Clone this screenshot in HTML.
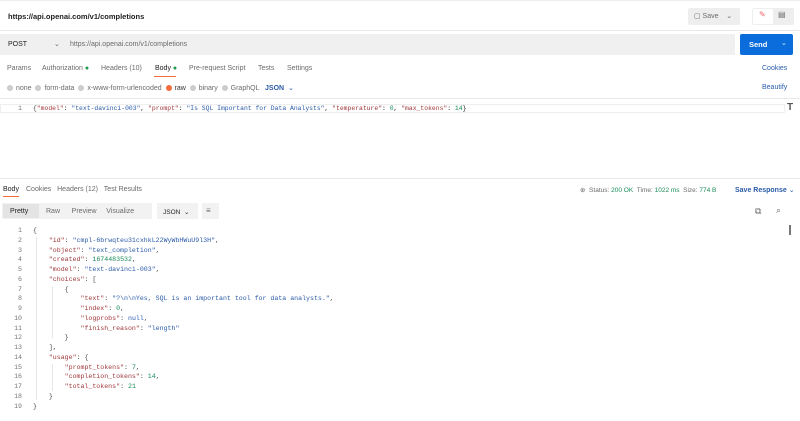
<!DOCTYPE html>
<html><head><style>
*{margin:0;padding:0;box-sizing:border-box}
body{width:800px;height:421px;background:#fff;font-family:"Liberation Sans",sans-serif;color:#212121;position:relative;overflow:hidden;font-size:7px}
.a{position:absolute;white-space:nowrap}
.g{color:#6b6b6b}
.mono{font-family:"Liberation Mono",monospace;font-size:6.6px}
.k{color:#a0383b}.s{color:#2a5ba8}.n{color:#1a8a5a}.p{color:#444}
.ln{color:#777;width:22px;text-align:right}
.dot{display:inline-block;width:6px;height:6px;border-radius:50%;background:#ccc;vertical-align:-1px;margin-right:3px}
</style></head><body>
<div class="a" style="left:0;top:0;width:800px;height:1px;background:#eee"></div>
<div class="a" style="left:8px;top:12px;font-size:7.5px;font-weight:bold">https://api.openai.com/v1/completions</div>
<div class="a" style="left:688px;top:8px;width:52px;height:17px;background:#eee;border-radius:2px"></div>
<div class="a g" style="left:694px;top:12px;font-size:7px">▢ Save &nbsp;&nbsp;&nbsp;⌄</div>
<div class="a" style="left:752px;top:8px;width:42px;height:17px;background:#eee;border-radius:2px"></div>
<div class="a" style="left:753px;top:9px;width:20px;height:15px;background:#fff"></div>
<div class="a" style="left:759px;top:10px;color:#e66;font-size:8px">✎</div>
<div class="a g" style="left:778px;top:10px;font-size:8px">▤</div>
<div class="a" style="left:0;top:30px;width:800px;height:1px;background:#e8e8e8"></div>
<div class="a" style="left:0;top:34px;width:735px;height:21px;background:#f0f0f0"></div>
<div class="a" style="left:8px;top:41px;font-size:7px">POST</div>
<div class="a g" style="left:54px;top:40px;font-size:7px">⌄</div>
<div class="a g" style="left:70px;top:41px;font-size:7px">https://api.openai.com/v1/completions</div>
<div class="a" style="left:740px;top:34px;width:53px;height:21px;background:#0a6ddb;border-radius:2px"></div>
<div class="a" style="left:749px;top:40px;font-size:7.5px;font-weight:bold;color:#fff">Send</div>
<div class="a" style="left:781px;top:39px;font-size:7px;color:#cfe">⌄</div>
<div class="a g" style="left:7px;top:65px;font-size:7px">Params</div>
<div class="a g" style="left:42px;top:65px;font-size:7px">Authorization <span style="color:#1a9a4a">●</span></div>
<div class="a g" style="left:101px;top:65px;font-size:7px">Headers (10)</div>
<div class="a" style="left:155px;top:65px;font-size:7px">Body <span style="color:#1a9a4a">●</span></div>
<div class="a" style="left:154px;top:76px;width:22px;height:1px;background:#f26b3a"></div>
<div class="a g" style="left:189px;top:65px;font-size:7px">Pre-request Script</div>
<div class="a g" style="left:258px;top:65px;font-size:7px">Tests</div>
<div class="a g" style="left:287px;top:65px;font-size:7px">Settings</div>
<div class="a" style="left:762px;top:65px;font-size:7px;color:#2a5ba8">Cookies</div>
<div class="a g" style="left:7px;top:84px;font-size:7px"><span class="dot"></span>none &nbsp;<span class="dot"></span>form-data &nbsp;<span class="dot"></span>x-www-form-urlencoded &nbsp;<span class="dot" style="background:#f26b3a"></span><span style="color:#333">raw</span> &nbsp;<span class="dot"></span>binary &nbsp;<span class="dot"></span>GraphQL &nbsp;&nbsp;<b style="color:#2a5ba8">JSON</b> &nbsp;<span style="color:#2a5ba8">⌄</span></div>
<div class="a" style="left:762px;top:84px;font-size:7px;color:#2a5ba8">Beautify</div>
<div class="a" style="left:0;top:98px;width:800px;height:1px;background:#e8e8e8"></div>
<div class="a" style="left:0;top:104px;width:785px;height:9px;border:1px solid #eee"></div>
<div class="a mono ln" style="left:0;top:105px">1</div>
<div class="a mono" style="left:33px;top:105px;font-size:6.4px"><span class="p">{</span><span class="k">"model"</span>: <span class="s">"text-davinci-003"</span>, <span class="k">"prompt"</span>: <span class="s">"Is SQL Important for Data Analysts"</span>, <span class="k">"temperature"</span>: <span class="n">0</span>, <span class="k">"max_tokens"</span>: <span class="n">14</span>}</div>
<div class="a" style="left:787px;top:102px;font-size:10px;font-weight:bold;color:#555">T</div>
<div class="a" style="left:0;top:178px;width:800px;height:1px;background:#e8e8e8"></div>
<div class="a" style="left:3px;top:186px;font-size:7px">Body</div>
<div class="a" style="left:3px;top:196px;width:16px;height:1px;background:#f26b3a"></div>
<div class="a g" style="left:26px;top:186px;font-size:7px">Cookies &nbsp;&nbsp;Headers (12) &nbsp;&nbsp;Test Results</div>
<div class="a g" style="left:580px;top:186px;font-size:6.5px">⊕ &nbsp;Status: <span style="color:#1a8a5a">200 OK</span> &nbsp;Time: <span style="color:#1a8a5a">1022 ms</span> &nbsp;Size: <span style="color:#1a8a5a">774 B</span></div>
<div class="a" style="left:735px;top:186px;font-size:7px;color:#2a5ba8;font-weight:bold">Save Response <span style="font-weight:normal">⌄</span></div>
<div class="a" style="left:2px;top:203px;width:150px;height:16px;background:#f2f2f2"></div>
<div class="a" style="left:3px;top:204px;width:36px;height:14px;background:#e4e4e4"></div>
<div class="a" style="left:10px;top:208px;font-size:7px">Pretty</div>
<div class="a g" style="left:46px;top:208px;font-size:7px">Raw &nbsp;&nbsp;&nbsp;&nbsp;&nbsp;Preview &nbsp;&nbsp;&nbsp;&nbsp;Visualize</div>
<div class="a" style="left:157px;top:203px;width:41px;height:16px;background:#f2f2f2"></div>
<div class="a" style="left:163px;top:208px;font-size:6.5px">JSON &nbsp;⌄</div>
<div class="a" style="left:202px;top:203px;width:17px;height:16px;background:#f2f2f2"></div>
<div class="a g" style="left:206px;top:206px;font-size:8px">≡</div>
<div class="a g" style="left:755px;top:206px;font-size:9px">⧉</div>
<div class="a g" style="left:776px;top:205px;font-size:9px">⌕</div>
<div class="a" style="left:789px;top:225px;width:2px;height:10px;background:#777"></div>
<div class="a" style="left:36px;top:237px;width:1px;height:163px;background:#e6e6e6"></div>
<div class="a" style="left:52px;top:286px;width:1px;height:52px;background:#e6e6e6"></div>
<div class="a" style="left:52px;top:364px;width:1px;height:27px;background:#e6e6e6"></div>
<div class="a mono" style="left:0;top:226px;line-height:9.75px">
<div style="display:flex"><div class="ln">1<br>2<br>3<br>4<br>5<br>6<br>7<br>8<br>9<br>10<br>11<br>12<br>13<br>14<br>15<br>16<br>17<br>18<br>19</div>
<div style="margin-left:11px;white-space:pre;color:#444">{
    <span class="k">"id"</span>: <span class="s">"cmpl-6brwqteu31cxhkL22WyWbHWuU9l3H"</span>,
    <span class="k">"object"</span>: <span class="s">"text_completion"</span>,
    <span class="k">"created"</span>: <span class="n">1674483532</span>,
    <span class="k">"model"</span>: <span class="s">"text-davinci-003"</span>,
    <span class="k">"choices"</span>: [
        {
            <span class="k">"text"</span>: <span class="s">"?\n\nYes, SQL is an important tool for data analysts."</span>,
            <span class="k">"index"</span>: <span class="n">0</span>,
            <span class="k">"logprobs"</span>: <span class="s">null</span>,
            <span class="k">"finish_reason"</span>: <span class="s">"length"</span>
        }
    ],
    <span class="k">"usage"</span>: {
        <span class="k">"prompt_tokens"</span>: <span class="n">7</span>,
        <span class="k">"completion_tokens"</span>: <span class="n">14</span>,
        <span class="k">"total_tokens"</span>: <span class="n">21</span>
    }
}</div></div></div>
</body></html>
